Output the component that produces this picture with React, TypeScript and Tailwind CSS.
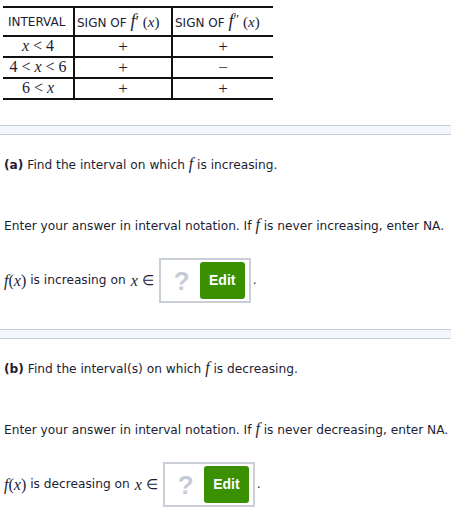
import React from 'react'

const serif = { fontFamily: '"Liberation Serif", "Times New Roman", serif' }

function M({ children }: { children: React.ReactNode }) {
  return (
    <span className="text-[16px] italic leading-none" style={serif}>
      {children}
    </span>
  )
}

function Band() {
  return <div className="h-[10px] border-y border-[#c3ccd8] bg-[#f3f7fb]" />
}

function AnswerBox() {
  return (
    <span className="ml-[5px] inline-flex h-[45px] items-center border-2 border-[#c9ced7] bg-white pl-[13px] pr-[4px]">
      <span className="w-[16px] text-[26px] font-bold leading-none text-[#c6ccd6]" style={{ fontFamily: '"Liberation Sans", Arial, sans-serif' }}>
        ?
      </span>
      <span
        className="ml-[10px] flex h-[37px] w-[45px] items-center justify-center rounded-[3px] bg-[#3a9000] text-[14px] font-bold text-white"
        style={{ fontFamily: '"Liberation Sans", Arial, sans-serif' }}
      >
        Edit
      </span>
    </span>
  )
}

const rows = [
  {
    interval: (
      <span style={serif} className="text-[16px]">
        <i>x</i> &lt; 4
      </span>
    ),
    d1: '+',
    d2: '+',
  },
  {
    interval: (
      <span style={serif} className="text-[16px]">
        4 &lt; <i>x</i> &lt; 6
      </span>
    ),
    d1: '+',
    d2: '−',
  },
  {
    interval: (
      <span style={serif} className="text-[16px]">
        6 &lt; <i>x</i>
      </span>
    ),
    d1: '+',
    d2: '+',
  },
]

function Part({ label, title, verb }: { label: string; title: React.ReactNode; verb: string }) {
  return (
    <>
      <p className="mt-[20px] h-[20px] whitespace-nowrap px-[4px] leading-[20px]">
        <b>({label})</b> {title}
      </p>
      <p className="mt-[41px] h-[20px] whitespace-nowrap px-[4px] leading-[20px]">
        Enter your answer in interval notation. If <M>f</M> is never {verb}, enter NA.
      </p>
      <div className="mt-[22px] flex items-center whitespace-nowrap px-[4px]">
        <M>
          f<span className="not-italic">(</span>x<span className="not-italic">)</span>
        </M>
        <span className="ml-[4px]">is {verb} on</span>
        <span className="ml-[5px] text-[16px] italic" style={serif}>x</span>
        <span className="ml-[4px] text-[14px]" style={serif}>∈</span>
        <AnswerBox />
        <span className="ml-[2px]">.</span>
      </div>
    </>
  )
}

export default function App() {
  return (
    <div className="min-h-[518px] w-[451px] bg-white text-[12.2px] text-[#1d1d33]" style={{ fontFamily: '"DejaVu Sans", Verdana, sans-serif' }}>
      <div className="pl-[3px] pt-[6px]">
        <table className="border-collapse text-[12px]">
          <thead>
            <tr className="h-[28px] border-y-2 border-[#111]">
              <th className="w-[71px] border-r-2 border-[#111] pl-[5px] text-left font-normal">INTERVAL</th>
              <th className="w-[98px] whitespace-nowrap border-r-2 border-[#111] px-[2px] text-left font-normal">
                SIGN OF <span style={serif} className="text-[18px] italic">f</span>
                <span style={serif} className="text-[16px]">′</span>{' '}
                <span style={serif} className="text-[15px]">
                  (<i>x</i>)
                </span>
              </th>
              <th className="w-[101px] whitespace-nowrap px-[2px] text-left font-normal">
                SIGN OF <span style={serif} className="text-[18px] italic">f</span>
                <span style={serif} className="relative -top-[4px] text-[13px]">′′</span>{' '}
                <span style={serif} className="text-[15px]">
                  (<i>x</i>)
                </span>
              </th>
            </tr>
          </thead>
          <tbody>
            {rows.map((r, i) => (
              <tr key={i} className="h-[21px] border-b-2 border-[#111]">
                <td className="border-r-2 border-[#111] text-center leading-[17px]">{r.interval}</td>
                <td className="border-r-2 border-[#111] text-center text-[17px] leading-[17px]" style={serif}>
                  {r.d1}
                </td>
                <td className="text-center text-[17px] leading-[17px]" style={serif}>
                  {r.d2}
                </td>
              </tr>
            ))}
          </tbody>
        </table>
      </div>

      <div className="mt-[25px]">
        <Band />
      </div>
      <Part label="a" title={<>Find the interval on which <M>f</M> is increasing.</>} verb="increasing" />

      <div className="mt-[26px]">
        <Band />
      </div>
      <Part label="b" title={<>Find the interval(s) on which <M>f</M> is decreasing.</>} verb="decreasing" />
    </div>
  )
}
